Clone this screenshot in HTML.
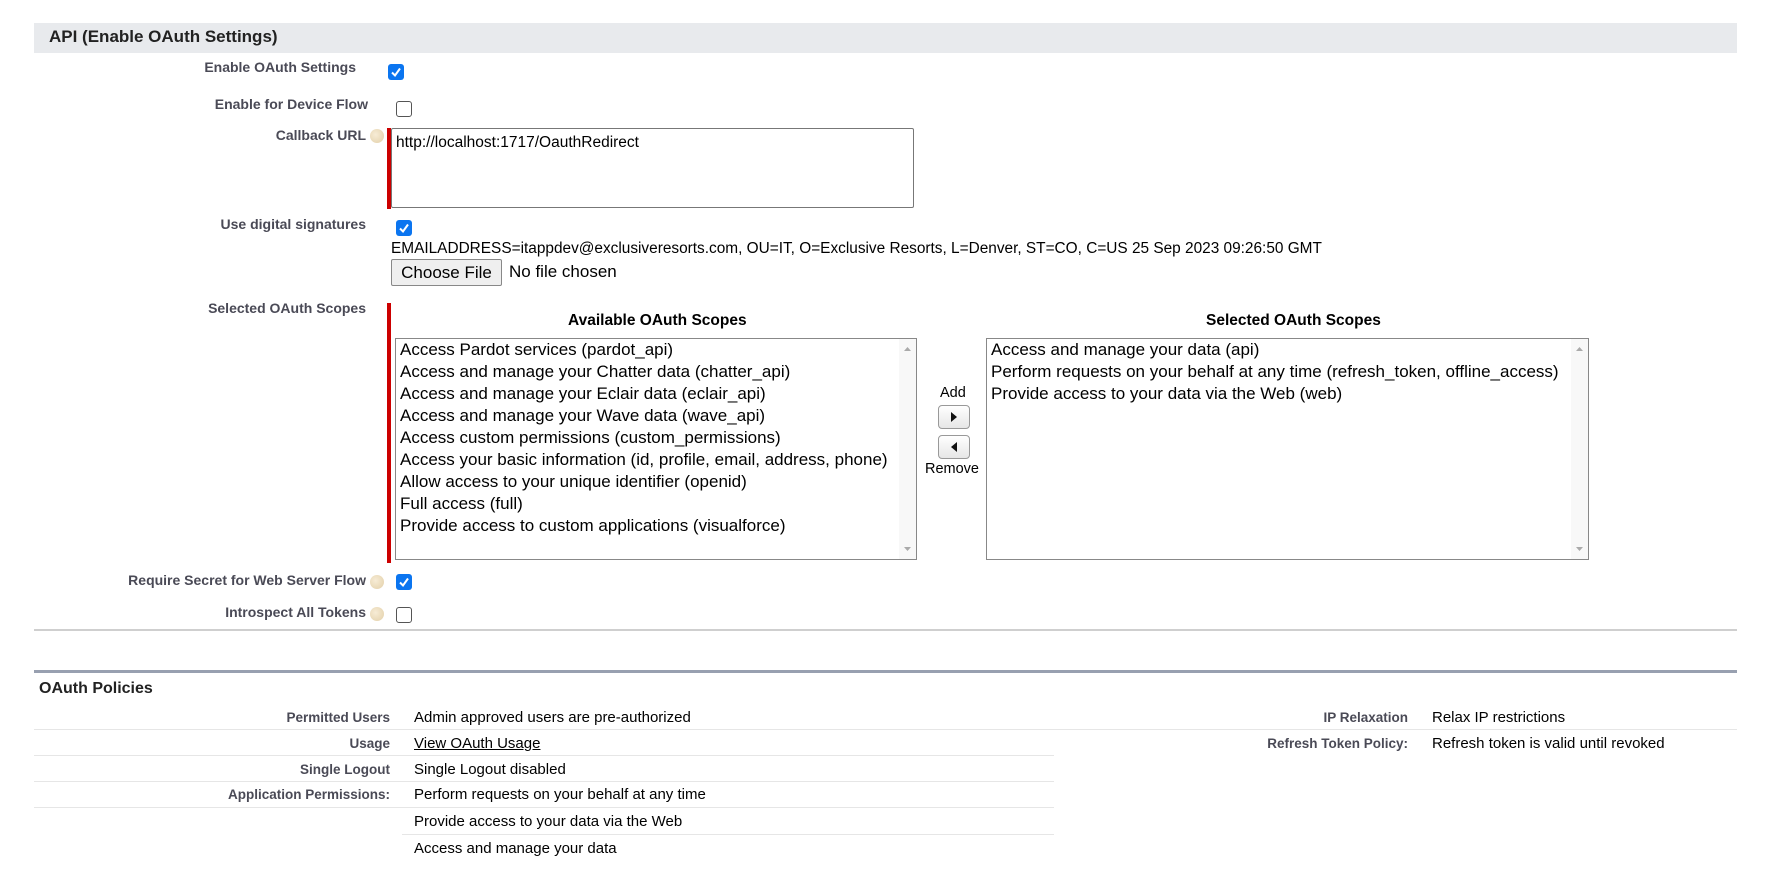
<!DOCTYPE html>
<html><head><meta charset="utf-8"><style>
*{margin:0;padding:0;box-sizing:border-box}
body{width:1782px;height:869px;background:#fff;font-family:"Liberation Sans",Arial,sans-serif;position:relative;overflow:hidden;color:#000}
.a{position:absolute;white-space:nowrap}
.lbl{position:absolute;right:1414px;font-size:14px;font-weight:bold;color:#4a4a56;text-align:right;white-space:nowrap}
.cb{position:absolute;width:16px;height:16px;border-radius:3px}
.cb.on{background:#0b75f0}
.cb.off{border:1.5px solid #555;background:#fff}
.help{position:absolute;width:14px;height:14px;border-radius:50%;background:radial-gradient(circle at 40% 40%,#f7ecd6,#e2cfa8)}
.box{position:absolute;border:1px solid #888;background:#fff;font-size:17px;line-height:22px;padding:0 4px}
.sb{position:absolute;right:0;top:0;bottom:0;width:17px;background:#f8f8f8}
.pl{position:absolute;font-size:13.5px;font-weight:bold;color:#4a4a56;text-align:right;white-space:nowrap}
.pv{position:absolute;font-size:15px;color:#000;white-space:nowrap}
.ln{position:absolute;height:1px;background:#e6e6e6}
.btn{position:absolute;width:32px;height:24px;border:1px solid #999;border-radius:4px;background:linear-gradient(#fff,#e6e6e6)}
</style></head><body>
<div class="a" style="left:34px;top:23px;width:1703px;height:30px;background:#e8eaed"></div>
<div class="a" style="left:49px;top:27px;font-size:17px;font-weight:bold;color:#222">API (Enable OAuth Settings)</div>

<div class="lbl" style="top:59px;right:1426px">Enable OAuth Settings</div>
<div class="cb on" style="left:388px;top:64px"><svg width="16" height="16"><path d="M4 8.5l3 3 5-7" stroke="#fff" stroke-width="2" fill="none"/></svg></div>

<div class="lbl" style="top:96px">Enable for Device Flow</div>
<div class="cb off" style="left:396px;top:101px"></div>

<div class="lbl" style="top:127px;right:1416px">Callback URL</div>
<div class="help" style="left:370px;top:129px"></div>
<div class="a" style="left:387px;top:128px;width:4px;height:81px;background:#c00"></div>
<div class="a" style="left:391px;top:128px;width:523px;height:80px;border:1px solid #777;border-radius:2px;font-size:15.5px;padding:5px 4px">http://localhost:1717/OauthRedirect</div>

<div class="lbl" style="top:216px;right:1416px">Use digital signatures</div>
<div class="cb on" style="left:396px;top:220px"><svg width="16" height="16"><path d="M4 8.5l3 3 5-7" stroke="#fff" stroke-width="2" fill="none"/></svg></div>
<div class="a" style="left:391px;top:240px;font-size:15.4px">EMAILADDRESS=itappdev@exclusiveresorts.com, OU=IT, O=Exclusive Resorts, L=Denver, ST=CO, C=US 25 Sep 2023 09:26:50 GMT</div>
<div class="a" style="left:391px;top:259px;width:111px;height:27px;border:1px solid #888;border-radius:2px;background:#efefef;font-size:17px;text-align:center;line-height:25px">Choose File</div>
<div class="a" style="left:509px;top:262px;font-size:17px">No file chosen</div>

<div class="lbl" style="top:300px;right:1416px">Selected OAuth Scopes</div>
<div class="a" style="left:387px;top:303px;width:4px;height:260px;background:#c00"></div>
<div class="a" style="left:568px;top:312px;font-size:15.5px;font-weight:bold">Available OAuth Scopes</div>
<div class="box" style="left:395px;top:338px;width:522px;height:222px">
Access Pardot services (pardot_api)<br>Access and manage your Chatter data (chatter_api)<br>Access and manage your Eclair data (eclair_api)<br>Access and manage your Wave data (wave_api)<br>Access custom permissions (custom_permissions)<br>Access your basic information (id, profile, email, address, phone)<br>Allow access to your unique identifier (openid)<br>Full access (full)<br>Provide access to custom applications (visualforce)
<div class="sb"><svg width="17" height="220" style="position:absolute;top:0;left:0"><path d="M5 12l3.5-4 3.5 4z" fill="#aaa"/><path d="M5 208l3.5 4 3.5-4z" fill="#aaa"/></svg></div></div>
<div class="a" style="left:940px;top:385px;font-size:14.5px">Add</div>
<div class="btn" style="left:938px;top:405px"><svg width="30" height="22"><path d="M12 6l6 5-6 5z" fill="#111"/></svg></div>
<div class="btn" style="left:938px;top:435px"><svg width="30" height="22"><path d="M18 6l-6 5 6 5z" fill="#111"/></svg></div>
<div class="a" style="left:925px;top:461px;font-size:14.5px">Remove</div>
<div class="a" style="left:1206px;top:312px;font-size:15.5px;font-weight:bold">Selected OAuth Scopes</div>
<div class="box" style="left:986px;top:338px;width:603px;height:222px">
Access and manage your data (api)<br>Perform requests on your behalf at any time (refresh_token, offline_access)<br>Provide access to your data via the Web (web)
<div class="sb"><svg width="17" height="220" style="position:absolute;top:0;left:0"><path d="M5 12l3.5-4 3.5 4z" fill="#aaa"/><path d="M5 208l3.5 4 3.5-4z" fill="#aaa"/></svg></div></div>

<div class="lbl" style="top:572px;right:1416px">Require Secret for Web Server Flow</div>
<div class="help" style="left:370px;top:575px"></div>
<div class="cb on" style="left:396px;top:574px"><svg width="16" height="16"><path d="M4 8.5l3 3 5-7" stroke="#fff" stroke-width="2" fill="none"/></svg></div>
<div class="lbl" style="top:604px;right:1416px">Introspect All Tokens</div>
<div class="help" style="left:370px;top:607px"></div>
<div class="cb off" style="left:396px;top:607px"></div>
<div class="a" style="left:34px;top:629px;width:1703px;height:2px;background:#cfcfcf"></div>

<div class="a" style="left:34px;top:670px;width:1703px;height:3px;background:#98a0b0"></div>
<div class="a" style="left:39px;top:680px;font-size:16px;font-weight:bold;color:#222">OAuth Policies</div>

<div class="pl" style="right:1392px;top:710px">Permitted Users</div><div class="pv" style="left:414px;top:709px">Admin approved users are pre-authorized</div>
<div class="ln" style="left:34px;top:729px;width:1020px"></div>
<div class="pl" style="right:1392px;top:736px">Usage</div><div class="pv" style="left:414px;top:735px;text-decoration:underline">View OAuth Usage</div>
<div class="ln" style="left:34px;top:755px;width:1020px"></div>
<div class="pl" style="right:1392px;top:762px">Single Logout</div><div class="pv" style="left:414px;top:761px">Single Logout disabled</div>
<div class="ln" style="left:34px;top:781px;width:1020px"></div>
<div class="pl" style="right:1392px;top:787px">Application Permissions:</div><div class="pv" style="left:414px;top:786px">Perform requests on your behalf at any time</div>
<div class="ln" style="left:34px;top:807px;width:1020px"></div>
<div class="pv" style="left:414px;top:813px">Provide access to your data via the Web</div>
<div class="ln" style="left:402px;top:834px;width:652px"></div>
<div class="pv" style="left:414px;top:840px">Access and manage your data</div>

<div class="pl" style="right:374px;top:710px">IP Relaxation</div><div class="pv" style="left:1432px;top:709px">Relax IP restrictions</div>
<div class="ln" style="left:1054px;top:729px;width:683px"></div>
<div class="pl" style="right:374px;top:736px">Refresh Token Policy:</div><div class="pv" style="left:1432px;top:735px">Refresh token is valid until revoked</div>
</body></html>
